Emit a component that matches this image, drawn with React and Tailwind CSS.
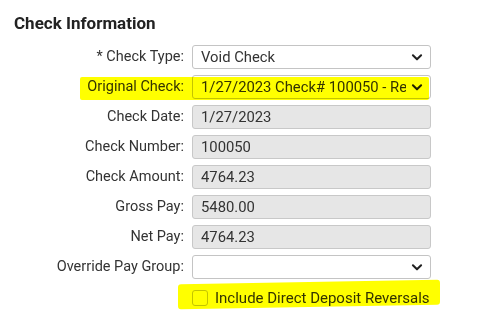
import React from 'react';

const Chevron = () => (
  <svg width="14" height="14" viewBox="0 0 24 24" fill="none" stroke="#222" strokeWidth="3.5" strokeLinecap="round" strokeLinejoin="round">
    <path d="M5 9l7 7 7-7" />
  </svg>
);

const ROWS = [
  { label: 'Check Date:', value: '1/27/2023' },
  { label: 'Check Number:', value: '100050' },
  { label: 'Check Amount:', value: '4764.23' },
  { label: 'Gross Pay:', value: '5480.00' },
  { label: 'Net Pay:', value: '4764.23' },
];

const Select = ({ value }) => (
  <div className="h-[24px] border border-[#c4c4c4] rounded-[3px] bg-white flex items-center justify-between pl-[8px] pr-[6px] overflow-hidden text-[14.8px]">
    <span className="whitespace-nowrap overflow-hidden">{value}</span>
    <span className="shrink-0 pl-1 bg-white"><Chevron /></span>
  </div>
);

const Label = ({ children }) => (
  <div className="text-right whitespace-nowrap text-[14.5px]">{children}</div>
);

export default function App() {
  return (
    <div className="relative w-[497px] h-[334px] bg-white text-[#333] text-[14px] overflow-hidden" style={{ fontFamily: 'Roboto, "Liberation Sans", sans-serif' }}>
      <div className="pl-[14px] pt-[12px]">
        <h2 className="text-[17px] font-bold text-[#222] leading-[22px]">Check Information</h2>
      </div>

      <div className="mt-[11px] grid grid-cols-[184px_239px] gap-x-[8px] gap-y-[6px] items-center">
        <Label>* Check Type:</Label>
        <Select value="Void Check" />

        <Label>Original Check:</Label>
        <Select value="1/27/2023 Check# 100050 - Regular" />

        {ROWS.map(r => (
          <React.Fragment key={r.label}>
            <Label>{r.label}</Label>
            <div className="h-[24px] border border-[#c8c8c8] rounded-[3px] bg-[#e6e6e6] flex items-center pl-[8px] text-[14.8px]">{r.value}</div>
          </React.Fragment>
        ))}

        <Label>Override Pay Group:</Label>
        <Select value="" />

        <div />
        <label className="flex items-center gap-[7px] mt-[2px]">
          <span className="w-[16px] h-[16px] border border-[#c4c4c4] rounded-[3px] bg-white shrink-0" />
          <span className="text-[15px] whitespace-nowrap">Include Direct Deposit Reversals</span>
        </label>
      </div>

      {/* marker highlights */}
      <div className="absolute left-[80px] top-[77px] w-[349px] h-[23px] bg-[#ffff00] mix-blend-multiply rounded-[2px]" />
      <div className="absolute left-[178px] top-[282px] w-[262px] h-[25px] bg-[#ffff00] mix-blend-multiply rounded-[3px] -skew-y-1" />
    </div>
  );
}
